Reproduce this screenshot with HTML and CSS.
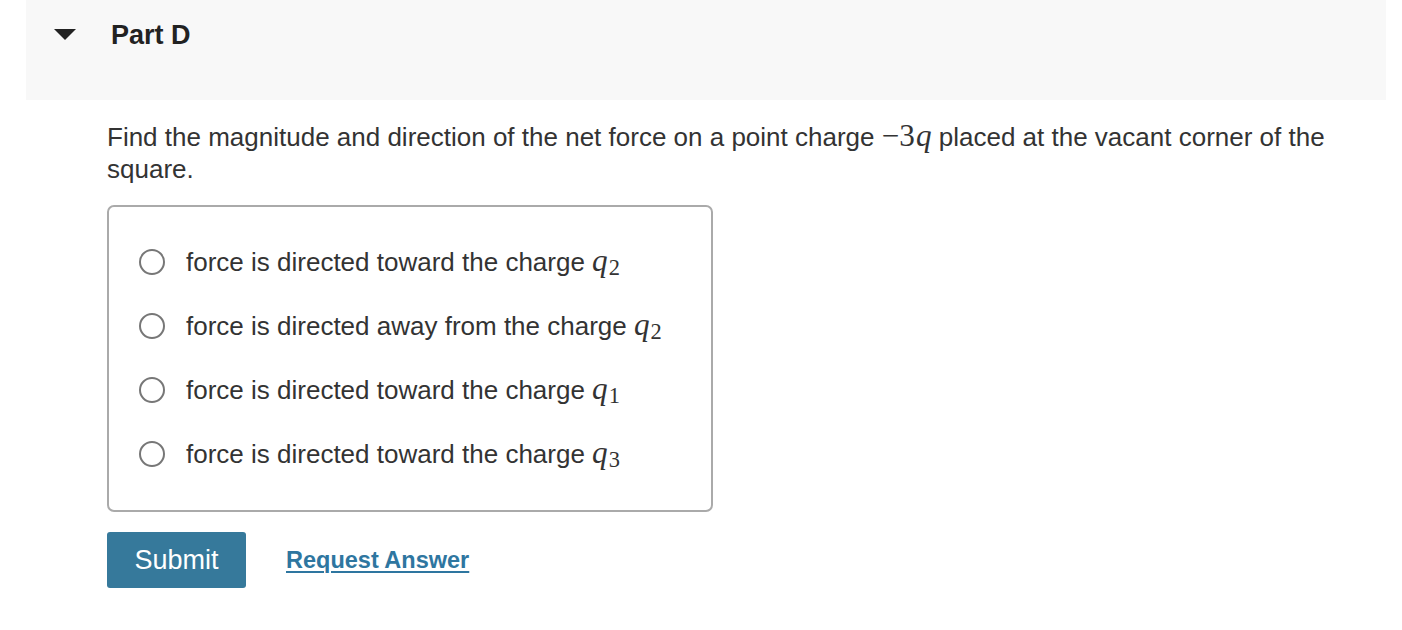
FILE: index.html
```html
<!DOCTYPE html>
<html>
<head>
<meta charset="utf-8">
<link rel="stylesheet" href="styles.css">
</head>
<body>
<div class="part-header">
  <span class="caret"></span>
  <h2 class="part-title">Part D</h2>
</div>
<div class="part-body">
  <p class="question">Find the magnitude and direction of the net force on a point charge <span class="math"><span class="mrm">−3</span><span class="mi">q</span></span> placed at the vacant corner of the square.</p>
  <div class="choices">
    <label class="choice"><span class="radio"></span><span class="choice-text">force is directed toward the charge <span class="math"><span class="mi">q</span><span class="sub">2</span></span></span></label>
    <label class="choice"><span class="radio"></span><span class="choice-text">force is directed away from the charge <span class="math"><span class="mi">q</span><span class="sub">2</span></span></span></label>
    <label class="choice"><span class="radio"></span><span class="choice-text">force is directed toward the charge <span class="math"><span class="mi">q</span><span class="sub">1</span></span></span></label>
    <label class="choice"><span class="radio"></span><span class="choice-text">force is directed toward the charge <span class="math"><span class="mi">q</span><span class="sub">3</span></span></span></label>
  </div>
  <div class="actions">
    <button class="submit">Submit</button>
    <a class="request" href="#">Request Answer</a>
  </div>
</div>
</body>
</html>
```

FILE: styles.css
```css
html, body {
  margin: 0;
  padding: 0;
  background: #ffffff;
}
body {
  font-family: "Liberation Sans", Arial, Helvetica, sans-serif;
  color: #333333;
}
.part-header {
  margin-left: 26px;
  width: 1360px;
  height: 100px;
  box-sizing: border-box;
  background: #f8f8f8;
  padding: 19px 0 0 28px;
  display: flex;
  align-items: flex-start;
}
.caret {
  width: 0;
  height: 0;
  border-left: 11px solid transparent;
  border-right: 11px solid transparent;
  border-top: 11px solid #222222;
  margin-top: 10px;
}
.part-title {
  margin: 0 0 0 35px;
  font-size: 27px;
  line-height: 32px;
  font-weight: bold;
  color: #222222;
}
.part-body {
  padding-left: 107px;
}
.question {
  margin: 21px 0 0 0;
  width: 1240px;
  font-size: 26px;
  line-height: 32px;
  color: #333333;
}
.math {
  font-family: "Liberation Serif", "Times New Roman", serif;
  font-size: 1.2em;
  line-height: 0;
  white-space: nowrap;
}
.mrm {
  margin-right: 1px;
}
.mi {
  font-style: italic;
}
.sub {
  font-size: 0.72em;
  position: relative;
  top: 0.22em;
  margin-left: 1px;
}
.choices {
  margin-top: 20px;
  width: 606px;
  box-sizing: border-box;
  border: 2px solid #aaaaaa;
  border-radius: 7px;
  padding: 23px 0 24px 30px;
}
.choice {
  display: flex;
  align-items: center;
  height: 64px;
  font-size: 26px;
  color: #333333;
}
.radio {
  width: 26px;
  height: 26px;
  box-sizing: border-box;
  border: 2px solid #777777;
  border-radius: 50%;
  flex: none;
  margin-right: 21px;
}
.actions {
  margin-top: 20px;
  display: flex;
  align-items: center;
}
.submit {
  width: 139px;
  height: 56px;
  border: none;
  border-radius: 3px;
  background: #36799b;
  color: #ffffff;
  font-family: "Liberation Sans", Arial, Helvetica, sans-serif;
  font-size: 27px;
  padding: 0;
}
.request {
  margin-left: 40px;
  font-size: 23.5px;
  font-weight: bold;
  color: #2e76a0;
  text-decoration: underline;
  text-underline-offset: 3px;
  text-decoration-thickness: 2px;
}
```
